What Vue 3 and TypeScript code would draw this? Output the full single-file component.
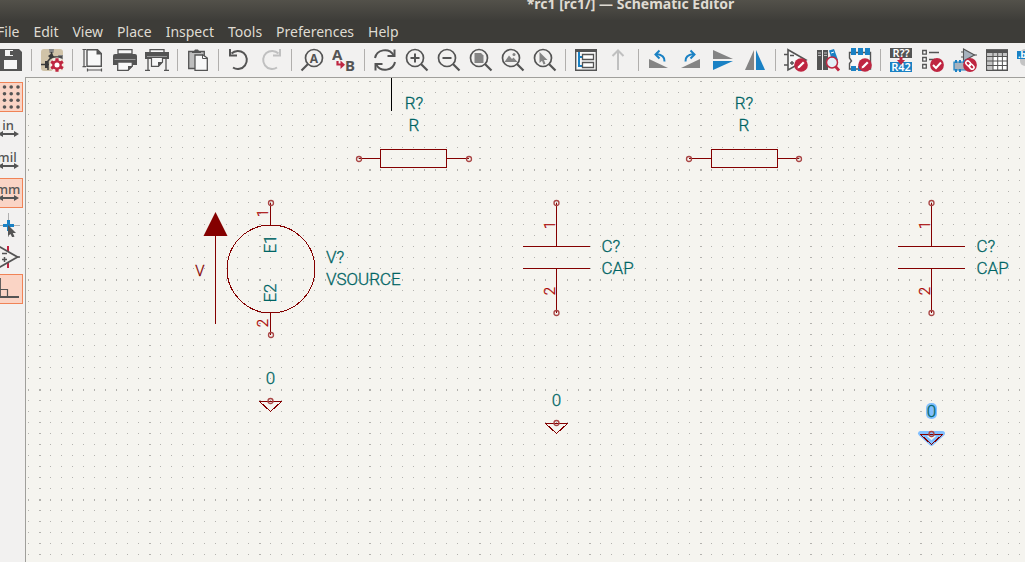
<script setup lang="ts">
interface Tool {
  name: string
  icon?: string
  off?: boolean
}

const D = '#545454'
const G = '#848484'
const B = '#1a81c4'
const R = '#bf2641'
const sans = 'font-family="Noto Sans, sans-serif"'

const lens = (inner: string) =>
  `<circle cx="10" cy="10" r="8.5" fill="none" stroke="${D}" stroke-width="1.7"/><path d="M16 16L22.5 22.5" stroke="${D}" stroke-width="2.2" fill="none"/>${inner}`
const editBadge = (x: number, y: number) =>
  `<circle cx="${x}" cy="${y}" r="6.8" fill="${R}"/><path d="M${x - 3.5} ${y + 3.5}L${x - 2.8} ${y + 1.2}L${x + 2} ${y - 3.6}L${x + 3.6} ${y - 2}L${x - 1.2} ${y + 2.8}Z" fill="#fff"/>`
const dimArrow = `<path d="M4 17H20" stroke="${D}" stroke-width="2"/><path d="M2 17L7 14V20ZM23 17L18 14V20Z" fill="${D}"/>`

const icons: Record<string, string> = {
  Save: `<path d="M1 1H20L23 4V23H1Z" fill="${D}"/><path d="M5 12H18V21H5Z" fill="#f5f5f5"/><path d="M6 2H14V8H6Z" fill="#f5f5f5"/><path d="M11 3H14V7H11Z" fill="${D}"/>`,
  'Schematic Setup': `<rect x="1" y="1" width="22" height="22" rx="3" fill="#d0c3a8"/><path d="M9 1H14L13.500 5H9.500Z" fill="${G}"/><path d="M18 7H23V11H19Z" fill="${G}"/><path d="M11.500 4V9L22 9M11.500 9L8 13V22M1 16.500H9" stroke="#3a3a3a" stroke-width="1.500" fill="none"/><path d="M8 8L12 5L14 9L11 11ZM5 13H8V20H5Z" fill="#3a3a3a"/><g transform="translate(17 17)"><circle r="7.500" fill="#f3eee4"/><path d="M0 -6.800V6.800M-5.900 -3.400L5.900 3.400M-5.900 3.400L5.900 -3.400" stroke="${R}" stroke-width="3.200"/><circle r="4.800" fill="${R}"/><circle r="2.500" fill="#fff"/></g>`,
  'Page Settings': `<path d="M6 1.700H16.500L20.300 5.500V18.300H6Z" fill="#f8f8f8" stroke="${D}" stroke-width="1.400"/><path d="M15.500 1V6.500H21Z" fill="${D}"/><path d="M3 1V19M1.500 1.500H5M1.500 18.700H5M6 22H21M6.500 20.500V23.500M20.500 20.500V23.500" stroke="${D}" stroke-width="1.200"/>`,
  Print: `<path d="M5 1.700H19V6H5Z" fill="#f8f8f8" stroke="${D}" stroke-width="1.300"/><path d="M2 6H22Q24 6 24 8V17H0V8Q0 6 2 6Z" fill="${D}"/><path d="M1.500 11.500H22.500" stroke="#999" stroke-width="1"/><path d="M4.700 14H19.300V18L15 22.300H4.700Z" fill="#f8f8f8" stroke="${D}" stroke-width="1.300"/><path d="M15 23V18H20Z" fill="${D}"/>`,
  Plot: `<path d="M5 1.700H19V5H5Z" fill="#f8f8f8" stroke="${D}" stroke-width="1.300"/><path d="M0 4H24V11H0Z" fill="${D}"/><path d="M2 8.500H22" stroke="#999"/><path d="M3 11V22M21 11V22M0 22.300H5M19 22.300H24" stroke="${D}" stroke-width="1.300"/><path d="M6.500 9.500H17.500V14L13.500 18.300H6.500Z" fill="#f8f8f8" stroke="${D}" stroke-width="1.200"/><path d="M13 18.500V14H18Z" fill="${D}"/>`,
  Paste: `<path d="M2.700 3.500H18.300V20.500H2.700Z" fill="#bdbdbd" stroke="${D}" stroke-width="1.300"/><path d="M6 5V3H8L9 1.500H12L13 3H15V5Z" fill="${D}"/><path d="M9 7H17L21.300 10V22.300H9Z" fill="#f8f8f8" stroke="${D}" stroke-width="1.300"/><path d="M16.500 6.500V10.500H21.500" fill="none" stroke="${D}"/>`,
  Undo: `<path d="M4.500 5.500A9 9 0 1 1 6 19.500" stroke="${D}" stroke-width="2" fill="none"/><path d="M3 1V7.500H10" stroke="${D}" stroke-width="2" fill="none"/>`,
  Redo: `<path d="M19.500 5.500A9 9 0 1 0 18 19.500" stroke="#c0c0c0" stroke-width="2" fill="none"/><path d="M21 1V7.500H14" stroke="#c0c0c0" stroke-width="2" fill="none"/>`,
  Find: `<circle cx="14" cy="10" r="8.500" fill="none" stroke="${D}" stroke-width="1.700"/><path d="M8 16L1.500 22.500" stroke="${D}" stroke-width="2.200"/><text x="14" y="14.500" text-anchor="middle" ${sans} font-weight="700" font-size="12" fill="${D}">A</text>`,
  'Find and Replace': `<text x="0" y="11.500" ${sans} font-weight="700" font-size="15" fill="${D}">A</text><text x="13" y="23" ${sans} font-weight="700" font-size="15" fill="${D}">B</text><path d="M5.500 13V16.500H9.500" stroke="${R}" stroke-width="2.200" fill="none"/><path d="M8.500 12.500L13 16.800L8.500 21Z" fill="${R}"/>`,
  Refresh: `<path d="M2 10A10 9.500 0 0 1 20.500 7M22 14A10 9.500 0 0 1 3.500 17" stroke="${D}" stroke-width="2" fill="none"/><path d="M21.500 1.500V8H14.500M2.500 22.500V16H9.500" stroke="${D}" stroke-width="2" fill="none"/>`,
  'Zoom In': lens(`<path d="M5.500 10H14.500M10 5.500V14.500" stroke="${D}" stroke-width="2"/>`),
  'Zoom Out': lens(`<path d="M5.500 10H14.500" stroke="${D}" stroke-width="2"/>`),
  'Zoom to Fit': lens(`<path d="M5.500 5H12L14.500 7.500V15H5.500Z" fill="${G}"/>`),
  'Zoom to Objects': lens(`<path d="M3.500 14L8 7.500L11 11L12.500 9.500L16.500 14Z" fill="${G}"/><circle cx="13" cy="6.500" r="1.500" fill="${G}"/>`),
  'Zoom to Selection': lens(`<path d="M6.500 4V15L9 12.800L10.500 16.500L12.500 15.700L11 12H14.500Z" fill="${G}"/>`),
  'Hierarchy Navigator': `<path d="M1.700 1.700H22.300V22.300H1.700Z" fill="#f8f8f8" stroke="${D}" stroke-width="1.400"/><path d="M1 1H23V4H1Z" fill="${D}"/><path d="M5 4V18H9M5 9H9" stroke="${B}" stroke-width="2" fill="none"/><path d="M8.500 6.500H19.500V11.500H8.500ZM8.500 14.500H19.500V19.500H8.500Z" fill="#fff" stroke="${D}" stroke-width="1.300"/>`,
  'Leave Sheet': `<path d="M12 22V3M6.500 8L12 2.500L17.500 8" stroke="#c0c0c0" stroke-width="2" fill="none"/>`,
  'Rotate Counterclockwise': `<path d="M2 11V20H21Z" fill="${G}"/><path d="M17.500 13.500Q18 7 9.500 6" stroke="${B}" stroke-width="2" fill="none"/><path d="M12.500 2.500L8.500 6.500L12.500 10.500" stroke="${B}" stroke-width="2" fill="none"/>`,
  'Rotate Clockwise': `<path d="M21 11V20H2Z" fill="${G}"/><path d="M6.500 13.500Q6 7 14.500 6" stroke="${B}" stroke-width="2" fill="none"/><path d="M11.500 2.500L15.500 6.500L11.500 10.500" stroke="${B}" stroke-width="2" fill="none"/>`,
  'Mirror Vertically': `<path d="M2 2L22 11H2Z" fill="${G}"/><path d="M2 22L22 13H2Z" fill="${B}"/>`,
  'Mirror Horizontally': `<path d="M11 2V22H2Z" fill="${G}"/><path d="M13 2V22H22Z" fill="${B}"/>`,
  'Symbol Editor': `<path d="M4 1.700L22 12L4 22Z" fill="#f8f8f8" stroke="${D}" stroke-width="1.600"/><path d="M0 6.500H4M0 17H4M6 7.500H10M6 15H10M8 13V17" stroke="${D}" stroke-width="1.400"/>${editBadge(17, 17)}`,
  'Symbol Library Browser': `<path d="M1 2H6V22H1ZM7 2H12V22H7Z" fill="${D}"/><path d="M2 5H5M2 7.500H5M8 5H11M8 7.500H11" stroke="#bbb"/><path d="M13 2.500L18 1L22 12L17 16Z" fill="${B}"/><path d="M15 5L18 4" stroke="#fff"/><circle cx="16" cy="14.500" r="5.500" fill="#e4f0f7" stroke="${R}" stroke-width="1.500"/><path d="M19.500 18.500L23 22.500" stroke="${R}" stroke-width="2.800"/>`,
  'Footprint Editor': `<path d="M1.500 4.500H22.500V21H1.500V15.500L3.500 13L1.500 10Z" fill="#f8f8f8" stroke="${D}" stroke-width="1.400"/><path d="M3 0H8V7H3ZM10 0H15V7H10ZM17 0H22V7H17ZM3 18H8V23H3ZM10 18H15V23H10Z" fill="${B}"/>${editBadge(17, 17)}`,
  Annotate: `<path d="M1 0H23V10H1Z" fill="${D}"/><path d="M1 14H23V24H1Z" fill="${B}"/><text x="12" y="9" text-anchor="middle" ${sans} font-weight="600" font-size="11" fill="#fff">R??</text><text x="12" y="23" text-anchor="middle" ${sans} font-weight="600" font-size="11" fill="#fff">R42</text><path d="M10.500 9H13.500V12H16L12 17L8 12H10.500Z" fill="${R}"/>`,
  'Electrical Rules Checker': `<path d="M1.700 2.500H5.300V6.200H1.700ZM1.700 9.500H5.300V13.200H1.700ZM1.700 16.500H5.300V20.200H1.700Z" fill="#fff" stroke="${D}" stroke-width="1.300"/><path d="M8 4.500H18M8 11.500H14" stroke="${D}" stroke-width="1.400"/><circle cx="16" cy="17" r="6.900" fill="${R}"/><path d="M12 17L15 20L20 14.500" stroke="#fff" stroke-width="2" fill="none"/>`,
  'Assign Footprints': `<path d="M10.500 1V13L21.500 7Z" fill="#a7b2bd" stroke="${D}" stroke-width="1.100"/><path d="M8 4H11M8 9H11M21 7H24" stroke="${D}"/><path d="M1 14H13V22H1Z" fill="#a7b2bd" stroke="${B}" stroke-width="1.200"/><path d="M2 12H4V15H2ZM6 12H8V15H6ZM10 12H12V15H10ZM2 21H4V24H2ZM6 21H8V24H6Z" fill="${B}"/><circle cx="17" cy="17" r="6.900" fill="${R}"/><g transform="rotate(45 17 17)" fill="none" stroke="#fff" stroke-width="1.500"><rect x="12" y="15.200" width="5.500" height="3.800" rx="1.900"/><rect x="16.500" y="15.200" width="5.500" height="3.800" rx="1.900"/></g>`,
  'Symbol Fields Table': `<path d="M1.700 2H22.300V22.300H1.700Z" fill="#fff" stroke="${D}" stroke-width="1.400"/><path d="M1 1.500H23V5H1Z" fill="${D}"/><path d="M2.400 5H8V21.600H2.400ZM8 5H21.600V8H8Z" fill="#c4c4c4"/><path d="M2 8.500H22M2 13H22M2 17.500H22M8 5V22M12.700 5V22M17.400 5V22" stroke="${D}"/>`,
  'Bill of Materials': `<rect x="3" y="1" width="16" height="17" rx="5" fill="#c4c4c4"/><path d="M0 3H24V11H0Z" fill="${B}"/><text x="1" y="10" ${sans} font-weight="700" font-size="9" fill="#fff">.bom</text>`,
  'Show Grid': [2, 8.7, 15.3, 22].map((y) => [1.8, 8.5, 15.2, 22].map((x) => `<circle cx="${x}" cy="${y}" r="1.8" fill="${D}"/>`).join('')).join(''),
  Inches: `<text x="12" y="13" text-anchor="middle" ${sans} font-weight="500" font-size="13" fill="${D}">in</text>${dimArrow}`,
  Mils: `<text x="11" y="13" text-anchor="middle" ${sans} font-weight="500" font-size="13" fill="${D}">mil</text>${dimArrow}`,
  Millimeters: `<text x="12" y="13" text-anchor="middle" ${sans} font-weight="500" font-size="13" fill="${D}">mm</text>${dimArrow}`,
  'Full-Window Crosshair': `<path d="M12.500 0V24M1 12.500H24" stroke="#b0b0b0"/><path d="M12.500 7V18M7 12.500H18" stroke="${B}" stroke-width="3"/><path d="M12 12V23L14.500 21L16.300 24.500L18.500 23.500L16.800 20H20Z" fill="${D}"/>`,
  'Show Hidden Pins': `<path d="M12 1V23" stroke="${R}" stroke-width="2"/><path d="M3 1.500L21.500 12L3 22.500Z" fill="#f3f2f0" stroke="${D}" stroke-width="1.800"/><path d="M6 8.500H11M6 14.500H11M8.500 12V17M21 12H24" stroke="${D}" stroke-width="1.500"/>`,
  'Orthogonal Lines': `<path d="M4 1V21M3 20H23" stroke="${D}" stroke-width="1.800" fill="none"/><path d="M4 12.500H11.500V20" stroke="${D}" stroke-width="1.200" fill="none"/>`,
}

const menus = ['File', 'Edit', 'View', 'Place', 'Inspect', 'Tools', 'Preferences', 'Help']

const groups: Tool[][] = [
  [{ name: 'Save' }],
  [{ name: 'Schematic Setup' }],
  [{ name: 'Page Settings' }, { name: 'Print' }, { name: 'Plot' }],
  [{ name: 'Paste' }],
  [{ name: 'Undo' }, { name: 'Redo', off: true }],
  [{ name: 'Find' }, { name: 'Find and Replace' }],
  [{ name: 'Refresh' }, { name: 'Zoom In' }, { name: 'Zoom Out' }, { name: 'Zoom to Fit' }, { name: 'Zoom to Objects' }, { name: 'Zoom to Selection' }],
  [{ name: 'Hierarchy Navigator' }, { name: 'Leave Sheet', off: true }],
  [{ name: 'Rotate Counterclockwise' }, { name: 'Rotate Clockwise' }, { name: 'Mirror Vertically' }, { name: 'Mirror Horizontally' }],
  [{ name: 'Symbol Editor' }, { name: 'Symbol Library Browser' }, { name: 'Footprint Editor' }],
  [{ name: 'Annotate' }, { name: 'Electrical Rules Checker' }, { name: 'Assign Footprints' }, { name: 'Symbol Fields Table' }, { name: 'Bill of Materials' }],
]

const sideTools = [
  { name: 'Show Grid', on: true },
  { name: 'Inches', on: false },
  { name: 'Mils', on: false },
  { name: 'Millimeters', on: true },
  { name: 'Full-Window Crosshair', on: false },
  { name: 'Show Hidden Pins', on: false },
  { name: 'Orthogonal Lines', on: true },
]

// Grid dots; every tenth row and column is drawn twice as thick.
function gridPath(cols: number, rows: number): string {
  let d = ''
  for (let r = 0; r < rows; r++) {
    const y = Math.floor(81.2 + r * 11.01)
    const h = r % 10 === 8 ? 2 : 1
    for (let c = 0; c < cols; c++) {
      const x = Math.floor(28.2 + c * 11.015)
      const w = c % 10 === 1 ? 2 : 1
      d += `M${x} ${y}h${w}v${h}h-${w}z`
    }
  }
  return d
}
const grid = gridPath(240, 140)

const resistors = [
  { x: 359, box: 380.5 },
  { x: 689, box: 711.5 },
]
const capacitors = [556.5, 931.5]
const grounds = [
  { x: 270.5, label: 384, y: 401.5, selected: false },
  { x: 556.5, label: 406, y: 423.5, selected: false },
  { x: 931.5, label: 417, y: 434.5, selected: true },
]
</script>

<template>
  <div class="window">
    <header class="titlebar">
      <h1>*rc1 [rc1/] — Schematic Editor</h1>
    </header>
    <nav class="menubar">
      <button v-for="m in menus" :key="m" type="button">{{ m }}</button>
    </nav>
    <div class="toolbar" role="toolbar" aria-label="Main toolbar">
      <div v-for="(g, i) in groups" :key="i" class="group">
        <button v-for="t in g" :key="t.name" type="button" :aria-label="t.name" :disabled="t.off">
          <svg width="24" height="24" viewBox="0 0 24 24" v-html="icons[t.name]" />
        </button>
      </div>
    </div>
    <div class="body">
      <div class="side" role="toolbar" aria-label="Display options">
        <button v-for="t in sideTools" :key="t.name" type="button" :aria-label="t.name" :aria-pressed="t.on" :class="{ on: t.on }">
          <svg width="24" height="24" viewBox="0 0 24 24" v-html="icons[t.name]" />
        </button>
      </div>
      <main class="canvas">
        <svg class="sheet" aria-label="Schematic">
          <g transform="translate(-26 -78)">
            <path class="dots" :d="grid" />
            <path class="cursor" d="M391.5 78V111" />

            <g v-for="r in resistors" :key="r.x">
              <path class="wire" :d="`M${r.x} 158.5H${r.box}M${r.box + 66} 158.5H${r.x + 110}`" />
              <rect class="wire" :x="r.box" y="149.500" width="66" height="18" />
              <circle class="pin" :cx="r.x" cy="159" r="2.500" />
              <circle class="pin" :cx="r.x + 110" cy="159" r="2.500" />
              <text class="field mid" :x="r.x + 55" y="109">R?</text>
              <text class="field mid" :x="r.x + 55" y="131">R</text>
            </g>

            <g>
              <circle class="wire" cx="271" cy="269" r="44" />
              <path class="wire" d="M270.500 203V225M270.500 313V335M215.500 236V324" />
              <path class="head" d="M215.500 212L227.500 236H203.500Z" />
              <circle class="pin" cx="271" cy="203" r="2.500" />
              <circle class="pin" cx="271" cy="335" r="2.500" />
              <text class="note mid" x="200" y="276">V</text>
              <text class="num mid" transform="translate(268 213) rotate(-90)">1</text>
              <text class="num mid" transform="translate(268 323) rotate(-90)">2</text>
              <text class="field mid" transform="translate(276 244) rotate(-90)">E1</text>
              <text class="field mid" transform="translate(276 293) rotate(-90)">E2</text>
              <text class="field" x="326" y="263">V?</text>
              <text class="field" x="326" y="285">VSOURCE</text>
            </g>

            <g v-for="x in capacitors" :key="x">
              <path class="wire" :d="`M${x} 203V246M${x} 269V313M${x - 33.5} 246.500h67M${x - 33.5} 268.500h67`" />
              <circle class="pin" :cx="x" cy="203" r="2.500" />
              <circle class="pin" :cx="x" cy="313" r="2.500" />
              <text class="num mid" :transform="`translate(${x - 2} 225) rotate(-90)`">1</text>
              <text class="num mid" :transform="`translate(${x - 2} 291) rotate(-90)`">2</text>
              <text class="field" :x="x + 45" y="252">C?</text>
              <text class="field" :x="x + 45" y="274">CAP</text>
            </g>

            <g v-for="g in grounds" :key="g.x">
              <template v-if="g.selected">
                <rect class="glow" :x="g.x - 5.5" :y="g.label - 14" width="11" height="16" rx="5" />
                <path class="halo" :d="`M${g.x - 11} ${g.y - 1}h22l-11 10z`" />
              </template>
              <path class="wire" :d="`M${g.x - 11} ${g.y}h22l-11 10z`" />
              <circle class="pin" :cx="g.x" :cy="g.y - 0.5" r="2.500" />
              <text class="field mid" :x="g.x" :y="g.label">0</text>
            </g>
          </g>
        </svg>
      </main>
    </div>
  </div>
</template>

<style>
html,
body,
#app {
  height: 100%;
}
body {
  margin: 0;
  overflow: hidden;
}
</style>

<style scoped>
.window {
  display: flex;
  flex-direction: column;
  height: 100%;
  overflow: hidden;
  background: #f2f1f0;
  font-family: "Noto Sans", sans-serif;
}
button {
  margin: 0;
  padding: 0;
  border: 0;
  background: none;
  font: inherit;
}
svg {
  display: block;
}
.titlebar {
  flex: none;
  height: 20px;
  padding-left: 236px;
  overflow: hidden;
  background: linear-gradient(#53514a, #3e3d39);
}
.titlebar h1 {
  margin: -6px 0 0;
  font-size: 14px;
  line-height: 20px;
  font-weight: 700;
  text-align: center;
  color: #dfdbd2;
}
.menubar {
  display: flex;
  flex: none;
  gap: 14px;
  height: 23px;
  background: #3d3c38;
  color: #dfdbd2;
  font-size: 14px;
  line-height: 23px;
}
.menubar button {
  color: inherit;
}
.menubar button:first-child {
  margin-left: -3px;
}
.toolbar {
  display: flex;
  flex: none;
  height: 34px;
  margin-left: -5px;
}
.group {
  display: flex;
  flex: none;
}
.group + .group::before {
  content: "";
  width: 1px;
  height: 22px;
  margin: 6px 4px;
  background: #b1afad;
}
.group button {
  display: grid;
  place-items: center;
  width: 32px;
  height: 34px;
}
.body {
  display: flex;
  flex: 1;
  min-height: 0;
}
.side {
  display: flex;
  flex: none;
  flex-direction: column;
  gap: 2px;
  width: 32px;
  margin-left: -7px;
  padding-top: 5px;
}
.side button {
  display: grid;
  place-items: center;
  box-sizing: border-box;
  width: 30px;
  height: 30px;
  border: 1px solid transparent;
}
.side button.on {
  border-color: #f08356;
  background: #fad4c5;
}
.canvas {
  flex: 1;
  min-width: 0;
  overflow: hidden;
  border-top: 1px solid #a09f9b;
  border-left: 1px solid #a09f9b;
  background: #f5f4ef;
}
.sheet {
  width: 100%;
  height: 100%;
}
.dots {
  fill: #b3b2ae;
  shape-rendering: crispEdges;
}
.cursor {
  stroke: #000000;
}
.wire {
  fill: none;
  stroke: #840000;
  stroke-linejoin: bevel;
  shape-rendering: crispEdges;
}
.head {
  fill: #840000;
}
.pin {
  fill: none;
  stroke: #a94545;
  stroke-width: 1.3;
}
.glow {
  fill: #80bfff;
}
.halo {
  fill: none;
  stroke: #80bfff;
  stroke-width: 5;
  stroke-linejoin: round;
}
.field,
.note,
.num {
  font-family: Roboto, "Liberation Sans", sans-serif;
  font-weight: 300;
  font-size: 17px;
  fill: #006464;
  stroke: #006464;
  stroke-width: 0.3;
}
.note {
  font-size: 15px;
  fill: #840000;
  stroke: #840000;
}
.num {
  font-size: 15px;
  fill: #a90000;
  stroke: #a90000;
}
.mid {
  text-anchor: middle;
}
</style>
